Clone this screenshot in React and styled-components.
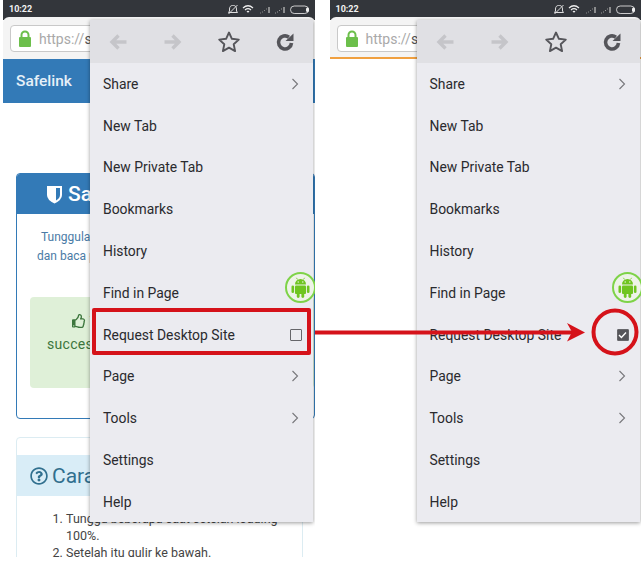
import React from "react"
import styled, { createGlobalStyle } from "styled-components"
import { FaRegThumbsUp, FaRegQuestionCircle } from "react-icons/fa"

const GlobalStyle = createGlobalStyle`
  html, body {
    margin: 0;
    background: #fff;
    overflow: hidden;
  }
  body {
    font-family: Roboto, "Liberation Sans", sans-serif;
  }
`

const Stage = styled.div`
  position: relative;
  width: 641px;
  height: 561px;
  display: flex;
  gap: 15px;
  padding-left: 3px;
  box-sizing: border-box;
`

const Phone = styled.div`
  position: relative;
  width: 312px;
  height: 557px;
  overflow: hidden;
  background: #fff;
`

const StatusBar = styled.div`
  height: 20px;
  background: #33363b;
  color: #f2f2f2;
  font-size: 9px;
  font-weight: 700;
  display: flex;
  align-items: flex-start;
  justify-content: space-between;
  padding: 4px 3px 0 6px;
  box-sizing: border-box;
`

const StatusIcons = styled.svg`
  width: 85px;
  height: 11px;
`

const UrlBar = styled.div`
  height: 42px;
  margin-top: -3px;
  background: #f4f4f4;
  border-radius: 6px 6px 0 0;
  border-bottom: ${(p) => (p.$accent ? "2px solid #f0a040" : "none")};
  padding: 8px 0 0 7px;
  box-sizing: border-box;
`

const UrlBox = styled.div`
  width: 120px;
  height: 27px;
  box-sizing: border-box;
  background: #fff;
  border: 1px solid #c9c9c9;
  border-radius: 4px;
  display: flex;
  align-items: center;
  gap: 7px;
  padding-left: 7px;
  font-size: 14px;
  color: #a9a9a9;
  white-space: nowrap;
  overflow: hidden;

  b {
    font-weight: 400;
    color: #555;
  }
`

const BlueHeader = styled.div`
  height: 44px;
  background: #337ab7;
  color: #e6f0f8;
  font-size: 15.5px;
  font-weight: 500;
  display: flex;
  align-items: center;
  padding-left: 13px;
`

const SafelinkPanel = styled.div`
  margin: 70px 0 0 13px;
  height: 244px;
  border: 1px solid #337ab7;
  border-radius: 4px;
  overflow: hidden;
`

const PanelHead = styled.div`
  height: 40px;
  background: #337ab7;
  color: #fff;
  font-size: 21px;
  font-weight: 500;
  display: flex;
  align-items: center;
  gap: 5px;
  padding-left: 29px;
`

const PanelText = styled.div`
  margin-top: 14px;
  color: #4a7ba6;
  font-size: 12px;
  line-height: 19px;
  white-space: nowrap;

  div:first-child {
    padding-left: 24px;
  }
  div:last-child {
    padding-left: 20px;
  }
`

const SuccessBox = styled.div`
  margin: 31px 0 0 13px;
  height: 91px;
  background: #dff0d8;
  border-radius: 4px;
  color: #3c763d;
  font-size: 14px;
  letter-spacing: 0.3px;
  padding: 14px 0 0 17px;
  box-sizing: border-box;
  line-height: 22px;
`

const ThumbIcon = styled(FaRegThumbsUp)`
  margin-left: 25px;
  font-size: 14px;
  vertical-align: -1px;
`

const HelpPanel = styled.div`
  margin: 18px 0 0 13px;
  width: 285px;
  border: 1px solid #dcecf2;
  border-radius: 4px 4px 0 0;
  padding-top: 17px;
`

const HelpHead = styled.div`
  height: 41px;
  background: #d9edf7;
  color: #31708f;
  font-size: 21px;
  display: flex;
  align-items: center;
  gap: 4px;
  padding-left: 13px;
`

const Steps = styled.ol`
  margin: 14px 0 0;
  padding: 0 20px 0 49px;
  color: #444;
  font-size: 12.5px;
  line-height: 17px;
`

const Menu = styled.div`
  position: absolute;
  top: 20px;
  left: 87px;
  width: 223px;
  height: 502px;
  background: #ebebf0;
  box-shadow: 0 1px 4px rgba(0, 0, 0, 0.4);
  display: flex;
  flex-direction: column;
`

const MenuTop = styled.div`
  height: 43px;
  background: #e0e0e4;
  display: flex;
  align-items: center;
  padding-left: 18px;
  flex-shrink: 0;
`

const TopIcon = styled.svg`
  width: ${(p) => p.$size || 20}px;
  height: ${(p) => p.$size || 20}px;
  flex-shrink: 0;
  margin-left: ${(p) => p.$shift || 0}px;
  transform: ${(p) => (p.$flip ? "scaleX(-1)" : "none")};
`

const MenuRow = styled.div`
  height: 41.8px;
  flex-shrink: 0;
  display: flex;
  align-items: center;
  justify-content: space-between;
  padding: 0 11px 0 13px;
  font-size: 13.9px;
  color: #2a2a2e;
`

const Chevron = styled.svg`
  width: 8px;
  height: 12px;
  margin-right: 3px;
`

const Box = styled.div`
  width: 10px;
  height: 10px;
  border: 1.5px solid #66666a;
  border-radius: 1px;
  background: ${(p) => (p.$on ? "#55555a" : "transparent")};
  display: flex;
  align-items: center;
  justify-content: center;
`

const AndroidBadge = styled.div`
  position: absolute;
  left: 282px;
  top: 272px;
  width: 31px;
  height: 31px;
  box-sizing: border-box;
  border: 2px solid #7ed348;
  border-radius: 50%;
  background: #eef3e8;
  display: flex;
  align-items: center;
  justify-content: center;
`

const RedRect = styled.div`
  position: absolute;
  left: 92px;
  top: 308px;
  width: 219px;
  height: 47px;
  box-sizing: border-box;
  border: 4px solid #d5121a;
  border-radius: 2px;
`

const Annotation = styled.svg`
  position: absolute;
  left: 0;
  top: 0;
  width: 641px;
  height: 561px;
  pointer-events: none;
`

const rows = [
  "Share",
  "New Tab",
  "New Private Tab",
  "Bookmarks",
  "History",
  "Find in Page",
  "Request Desktop Site",
  "Page",
  "Tools",
  "Settings",
  "Help",
]
const withChevron = ["Share", "Page", "Tools"]

const Lock = () => (
  <svg width="14" height="17" viewBox="0 0 14 17">
    <path d="M3.5 8V5a3.5 3.5 0 0 1 7 0v3" fill="none" stroke="#6cbf4b" strokeWidth="2" />
    <rect x="1" y="7" width="12" height="10" rx="1" fill="#6cbf4b" />
  </svg>
)

const ArrowIcon = ({ flip, shift }) => (
  <TopIcon viewBox="0 0 20 20" $flip={flip} $shift={shift}>
    <path d="M18.500 10H4M10.500 3.500 4 10l6.500 6.500" fill="none" stroke="#c5c5c9" strokeWidth="3.400" />
  </TopIcon>
)

const AndroidRobot = () => (
  <svg width="19" height="22" viewBox="0 0 19 22">
    <g fill="#6fc51f">
      <path d="M4 7.500a5.500 5.500 0 0 1 11 0z" />
      <rect x="4" y="8.500" width="11" height="8.500" rx="1" />
      <rect x="0.500" y="8.500" width="2.600" height="7.500" rx="1.300" />
      <rect x="15.900" y="8.500" width="2.600" height="7.500" rx="1.300" />
      <rect x="5.800" y="15" width="2.800" height="6" rx="1.400" />
      <rect x="10.400" y="15" width="2.800" height="6" rx="1.400" />
    </g>
    <path d="M6.500 2.500 5.400 .8M12.500 2.500l1.100-1.700" stroke="#6fc51f" strokeWidth=".8" />
    <circle cx="7.200" cy="5" r=".7" fill="#eef3e8" />
    <circle cx="11.800" cy="5" r=".7" fill="#eef3e8" />
  </svg>
)

const MenuPanel = ({ checked }) => (
  <Menu>
    <MenuTop>
      <ArrowIcon />
      <ArrowIcon flip shift={35} />
      <TopIcon $size={24} $shift={34} viewBox="0 0 24 24">
        <path
          d="M12 2.500l2.900 6.300 6.900.8-5.100 4.700 1.400 6.800-6.100-3.400-6.100 3.400 1.400-6.800-5.100-4.700 6.900-.8z"
          fill="none"
          stroke="#55555a"
          strokeWidth="1.900"
          strokeLinejoin="round"
        />
      </TopIcon>
      <TopIcon $size={20} $shift={34} viewBox="0 0 20 20">
        <path d="M16.500 11a6.500 6.500 0 1 1-2.600-5.800" fill="none" stroke="#55555a" strokeWidth="3.600" />
        <path d="M10.500 9h8V1.500z" fill="#55555a" />
      </TopIcon>
    </MenuTop>
    {rows.map((label) => (
      <MenuRow key={label}>
        {label}
        {withChevron.includes(label) && (
          <Chevron viewBox="0 0 8 12">
            <path d="M1.500 1l5 5-5 5" fill="none" stroke="#77777b" strokeWidth="1.100" />
          </Chevron>
        )}
        {label === "Request Desktop Site" && (
          <Box $on={checked}>
            {checked && (
              <svg width="9" height="8" viewBox="0 0 9 8">
                <path d="M1 4l2.400 2.400L8 1.500" fill="none" stroke="#fff" strokeWidth="1.400" />
              </svg>
            )}
          </Box>
        )}
      </MenuRow>
    ))}
  </Menu>
)

const Chrome = ({ accent }) => (
  <>
    <StatusBar>
      10:22
      <StatusIcons viewBox="0 0 85 11">
        <path d="M5.500 1.500c-2 0-3 1.500-3 3.500v2l-1 1.500h9L9.500 7V5c0-2-1-3.500-3-3.500z" fill="none" stroke="#ddd" strokeWidth="1" />
        <path d="M1.500 10l9-9" stroke="#ddd" strokeWidth="1" />
        <path d="M16 4q5-4.500 10 0M18 6q3-2.600 6 0M20 8q1-1 2 0" fill="none" stroke="#eee" strokeWidth="1.200" />
        <path d="M33 9h1M35 8h1M37 6.500h1M39 5h1" stroke="#888" strokeWidth="1" />
        <path d="M42 3v6" stroke="#aaa" strokeWidth="1.500" />
        <path d="M48 9h1M50 8h1M52 6.500h1M54 5h1" stroke="#999" strokeWidth="1" />
        <path d="M57 3v6" stroke="#aaa" strokeWidth="1.500" />
        <rect x="63.500" y="2" width="18" height="7.500" rx="3.700" fill="none" stroke="#ddd" strokeWidth=".900" />
        <rect x="79" y="3.500" width="3" height="4.500" rx="1.500" fill="#eee" />
      </StatusIcons>
    </StatusBar>
    <UrlBar $accent={accent}>
      <UrlBox>
        <Lock />
        <span>
          https://<b>sa</b>
        </span>
      </UrlBox>
    </UrlBar>
  </>
)

export default function App() {
  return (
    <Stage>
      <GlobalStyle />
      <Phone>
        <Chrome />
        <BlueHeader>Safelink</BlueHeader>
        <SafelinkPanel>
          <PanelHead>
            <svg width="17" height="19" viewBox="0 0 17 19">
              <path d="M1 1h15v9q0 5-7.500 8.500Q1 15 1 10z" fill="#fff" />
              <path d="M10 3h4v7q0 3-4 5.500z" fill="#337ab7" />
            </svg>
            Safelink
          </PanelHead>
          <PanelText>
            <div>Tunggulah beberapa saat</div>
            <div>dan baca petunjuk</div>
          </PanelText>
          <SuccessBox>
            <ThumbIcon /> Yes
            <br />
            success
          </SuccessBox>
        </SafelinkPanel>
        <HelpPanel>
          <HelpHead>
            <FaRegQuestionCircle size={18} />
            Cara
          </HelpHead>
          <Steps>
            <li>Tunggu beberapa saat setelah loading 100%.</li>
            <li>Setelah itu gulir ke bawah.</li>
          </Steps>
        </HelpPanel>
        <MenuPanel />
        <AndroidBadge>
          <AndroidRobot />
        </AndroidBadge>
      </Phone>
      <Phone>
        <Chrome accent />
        <MenuPanel checked />
        <AndroidBadge>
          <AndroidRobot />
        </AndroidBadge>
      </Phone>
      <RedRect />
      <Annotation viewBox="0 0 641 561">
        <path d="M315 332.500H576" stroke="#d5121a" strokeWidth="4" fill="none" />
        <path d="M567 323l18 9.500-18 9 5-9.500z" fill="#d5121a" />
        <circle cx="615" cy="332" r="21.500" fill="none" stroke="#d5121a" strokeWidth="4" />
      </Annotation>
    </Stage>
  )
}
